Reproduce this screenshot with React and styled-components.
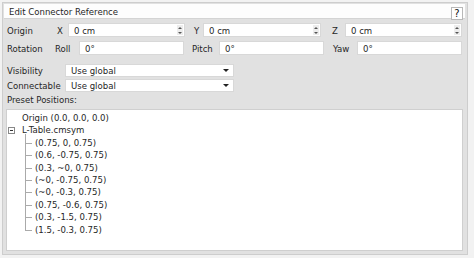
import styled, { createGlobalStyle } from "styled-components";

const Global = createGlobalStyle`
  html, body {
    margin: 0;
    background: #f2f2f2;
  }
  body {
    font-family: "DejaVu Sans Condensed", "DejaVu Sans", "Liberation Sans", sans-serif;
    font-stretch: condensed;
    font-size: 9.5px;
    color: #262626;
  }
`;

const Panel = styled.div`
  margin: 2px 0 0 2px;
  width: 464px;
  height: 251px;
  border: 1px solid #cdcdcd;
  background: #e1e1e1;
  display: flex;
  flex-direction: column;
`;

const TitleBar = styled.div`
  height: 14px;
  margin: 1px 2px 0 1px;
  background: #fdfdfd;
  border-bottom: 1px solid #d4d4d4;
  display: flex;
  align-items: center;
  padding: 0 2px 0 5px;
  span { flex: 1; padding-top: 1px; }
`;

const Help = styled.div`
  width: 10px;
  height: 11px;
  margin-top: 4px;
  border: 1px solid #b8b8b8;
  background: #fff;
  font-size: 11px;
  line-height: 11px;
  text-align: center;
  color: #111;
`;

const Body = styled.div`
  flex: 1;
  display: flex;
  flex-direction: column;
  padding: 3px 4px 3px 4px;
`;

const Row = styled.div`
  display: flex;
  align-items: center;
  height: ${p => p.$h || 16}px;
  margin-bottom: ${p => p.$gap || 0}px;
`;

const Label = styled.span`
  box-sizing: border-box;
  width: ${p => p.$w}px;
  flex: none;
  padding-left: ${p => p.$pl || 0}px;
  white-space: nowrap;
`;

const Field = styled.div`
  position: relative;
  width: ${p => p.$w}px;
  height: ${p => p.$h || 14}px;
  flex: none;
  box-sizing: border-box;
  background: #fff;
  border: 1px solid #d8d8d8;
  padding-left: 5px;
  display: flex;
  align-items: center;
  white-space: nowrap;
`;

const Spin = styled.div`
  position: absolute;
  right: 1px;
  top: 1px;
  bottom: 1px;
  width: 6px;
  background: #ededed;
  display: flex;
  flex-direction: column;
  align-items: center;
  justify-content: space-around;
  i {
    width: 0;
    height: 0;
    border-left: 2px solid transparent;
    border-right: 2px solid transparent;
  }
  i:first-child { border-bottom: 2px solid #555; }
  i:last-child { border-top: 2px solid #555; }
`;

const Arrow = styled.div`
  position: absolute;
  right: 4px;
  top: 4px;
  width: 0;
  height: 0;
  border-left: 3px solid transparent;
  border-right: 3px solid transparent;
  border-top: 3px solid #222;
`;

const Tree = styled.div`
  margin: 3px 0 0 -1px;
  width: 457px;
  height: 142px;
  box-sizing: border-box;
  background: #fff;
  border: 1px solid #cfcfcf;
  padding: 2px 0 0 3px;
`;

const Item = styled.div`
  position: relative;
  height: 12.4px;
  line-height: 12.4px;
  padding-left: ${p => p.$indent}px;
  white-space: nowrap;
`;

const Toggle = styled.span`
  position: absolute;
  left: -2px;
  top: 3px;
  width: 5px;
  height: 5px;
  border: 1px solid #888;
  &::after {
    content: "";
    position: absolute;
    left: 1px;
    top: 2px;
    width: 3px;
    height: 1px;
    background: #333;
  }
`;

const Branch = styled.span`
  position: absolute;
  left: 15px;
  top: ${p => (p.$first ? -3 : -6)}px;
  width: 6px;
  height: ${p => (p.$first ? 9 : 12)}px;
  border-left: 1px solid #aaa;
  border-bottom: 1px solid #aaa;
`;

const children = [
  "(0.75, 0, 0.75)",
  "(0.6, -0.75, 0.75)",
  "(0.3, ~0, 0.75)",
  "(~0, -0.75, 0.75)",
  "(~0, -0.3, 0.75)",
  "(0.75, -0.6, 0.75)",
  "(0.3, -1.5, 0.75)",
  "(1.5, -0.3, 0.75)",
];

function NumField({ w, value }) {
  return (
    <Field $w={w}>
      {value}
      <Spin><i /><i /></Spin>
    </Field>
  );
}

function Select({ w, value }) {
  return (
    <Field $w={w} $h={13}>
      {value}
      <Arrow />
    </Field>
  );
}

export default function App() {
  return (
    <>
      <Global />
      <Panel>
        <TitleBar>
          <span>Edit Connector Reference</span>
          <Help>?</Help>
        </TitleBar>
        <Body>
          <Row $gap={2}>
            <Label $w={50}>Origin</Label>
            <Label $w={11}>X</Label>
            <NumField w={117} value="0 cm" />
            <Label $w={18} $pl={9}>Y</Label>
            <NumField w={118} value="0 cm" />
            <Label $w={24} $pl={11}>Z</Label>
            <NumField w={117} value="0 cm" />
          </Row>
          <Row $gap={7}>
            <Label $w={48}>Rotation</Label>
            <Label $w={24}>Roll</Label>
            <Field $w={105}>0°</Field>
            <Label $w={35} $pl={8}>Pitch</Label>
            <Field $w={105}>0°</Field>
            <Label $w={33} $pl={9}>Yaw</Label>
            <Field $w={105}>0°</Field>
          </Row>
          <Row $h={15}>
            <Label $w={58}>Visibility</Label>
            <Select w={169} value="Use global" />
          </Row>
          <Row $h={15}>
            <Label $w={58}>Connectable</Label>
            <Select w={169} value="Use global" />
          </Row>
          <Row $h={13}>
            <Label $w={120}>Preset Positions:</Label>
          </Row>
          <Tree>
            <Item $indent={12}>Origin (0.0, 0.0, 0.0)</Item>
            <Item $indent={12}><Toggle />L-Table.cmsym</Item>
            {children.map((c, i) => (
              <Item key={c} $indent={25}>
                <Branch $first={i === 0} />
                {c}
              </Item>
            ))}
          </Tree>
        </Body>
      </Panel>
    </>
  );
}
